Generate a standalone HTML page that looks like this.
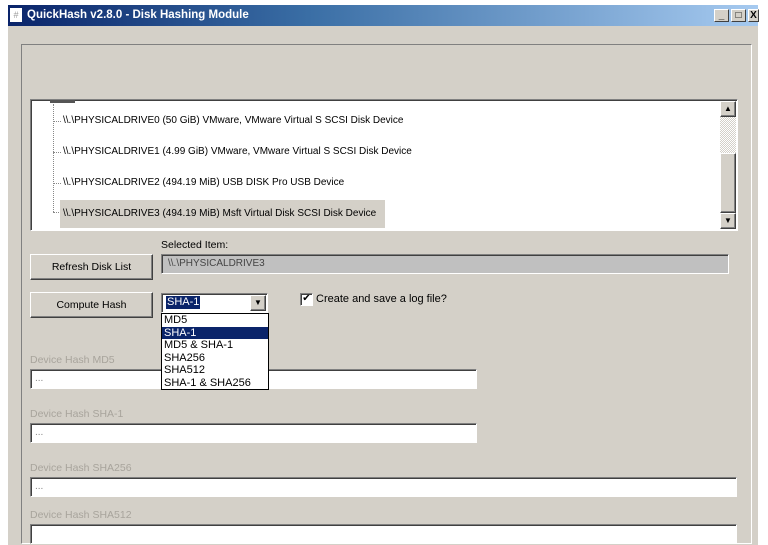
<!DOCTYPE html><html><head><style>
body{margin:0;width:768px;height:533px;background:#fff;position:relative;overflow:hidden;font-family:"Liberation Sans",sans-serif;font-size:11px;}
.a{position:absolute;box-sizing:border-box;white-space:nowrap}
.win{left:8px;top:5px;width:750px;height:540px;background:#d4d0c8;}
.title{left:8px;top:5px;width:750px;height:21px;background:linear-gradient(90deg,#0a246a 0%,#3a6ea5 40%,#a6caf0 100%);color:#fff;font-weight:bold;font-size:11.5px;line-height:21px;padding-left:19px}
.tb{width:15px;height:13px;top:9px;background:#d4d0c8;border:1px solid;border-color:#fff #404040 #404040 #fff;font-size:10px;line-height:11px;text-align:center;color:#000;font-weight:bold}
.sunk{border:1px solid;border-color:#808080 #fff #fff #808080;box-shadow:inset 1px 1px 0 #404040}
.btn{background:#d4d0c8;border:1px solid;border-color:#fff #404040 #404040 #fff;box-shadow:inset -1px -1px 0 #808080;text-align:center;color:#000;font-size:11px}
.lbl{color:#a8a49c;font-size:11px}
.txt{background:#fff;color:#888;font-size:10px;padding-left:4px;line-height:18px}
.row{left:60px;height:22px;line-height:22px;color:#000;font-size:10px;padding:0 3px}
.dd div{height:12.5px;line-height:12.5px;padding-left:2px;font-size:11px}
</style></head><body>
<div class="a win"></div>
<div class="a title">QuickHash v2.8.0 - Disk Hashing Module</div>
<div class="a" style="left:10px;top:8px;width:12px;height:14px;background:#fff;color:#999;font-size:9px;text-align:center;line-height:14px">#</div>
<div class="a tb" style="left:714px">_</div>
<div class="a tb" style="left:731px">□</div>
<div class="a tb" style="left:748px;width:11px">X</div>
<div class="a" style="left:21px;top:44px;width:731px;height:500px;border:1px solid;border-color:#808080 #fff #fff #808080"></div>
<div class="a sunk" style="left:30px;top:99px;width:708px;height:132px;background:#fff"></div>
<div class="a" style="left:50px;top:100px;width:25px;height:3px;background:#555"></div>
<div class="a" style="left:53px;top:104px;height:108px;border-left:1px dotted #888"></div>
<div class="a" style="left:53px;top:121px;width:8px;border-top:1px dotted #888"></div>
<div class="a" style="left:53px;top:152px;width:8px;border-top:1px dotted #888"></div>
<div class="a" style="left:53px;top:183px;width:8px;border-top:1px dotted #888"></div>
<div class="a" style="left:53px;top:212px;width:8px;border-top:1px dotted #888"></div>
<div class="a row" style="top:110px">\\.\PHYSICALDRIVE0 (50 GiB) VMware, VMware Virtual S SCSI Disk Device</div>
<div class="a row" style="top:141px">\\.\PHYSICALDRIVE1 (4.99 GiB) VMware, VMware Virtual S SCSI Disk Device</div>
<div class="a row" style="top:172px">\\.\PHYSICALDRIVE2 (494.19 MiB) USB DISK Pro USB Device</div>
<div class="a row" style="top:200px;background:#d4d0c8;height:28px;line-height:28px;width:325px">\\.\PHYSICALDRIVE3 (494.19 MiB) Msft Virtual Disk SCSI Disk Device</div>
<div class="a" style="left:720px;top:101px;width:16px;height:128px;background:repeating-conic-gradient(#fff 0 25%,#d4d0c8 0 50%) 0 0/2px 2px"></div>
<div class="a btn" style="left:720px;top:101px;width:16px;height:16px;font-size:8px;line-height:14px">▲</div>
<div class="a btn" style="left:720px;top:153px;width:16px;height:60px"></div>
<div class="a btn" style="left:720px;top:213px;width:16px;height:16px;font-size:8px;line-height:14px">▼</div>
<div class="a" style="left:161px;top:239px;font-size:10.5px">Selected Item:</div>
<div class="a sunk" style="left:161px;top:254px;width:568px;height:20px;background:#c0c0c0;padding-left:6px;line-height:18px;color:#444;font-size:10px">\\.\PHYSICALDRIVE3</div>
<div class="a btn" style="left:30px;top:254px;width:123px;height:26px;line-height:24px;font-size:10.5px">Refresh Disk List</div>
<div class="a btn" style="left:30px;top:292px;width:123px;height:26px;line-height:24px;font-size:10.5px">Compute Hash</div>
<div class="a sunk" style="left:161px;top:293px;width:107px;height:20px;background:#fff"></div>
<div class="a" style="left:166px;top:296px;background:#0a246a;color:#fff;padding:0 1px;line-height:13px">SHA-1</div>
<div class="a btn" style="left:250px;top:295px;width:16px;height:16px;font-size:8px;line-height:14px">▼</div>
<div class="a sunk" style="left:300px;top:293px;width:13px;height:13px;background:#fff;font-size:10px;line-height:10px;text-align:center">✔</div>
<div class="a" style="left:316px;top:293px">Create and save a log file?</div>
<div class="a lbl" style="left:30px;top:354px;font-size:10.5px">Device Hash MD5</div>
<div class="a sunk txt" style="left:30px;top:369px;width:447px;height:20px">...</div>
<div class="a dd" style="left:161px;top:313px;width:108px;height:77px;background:#fff;border:1px solid #000">
<div>MD5</div><div style="background:#0a246a;color:#fff">SHA-1</div><div>MD5 &amp; SHA-1</div><div>SHA256</div><div>SHA512</div><div>SHA-1 &amp; SHA256</div></div>
<div class="a lbl" style="left:30px;top:408px;font-size:10.5px">Device Hash SHA-1</div>
<div class="a sunk txt" style="left:30px;top:423px;width:447px;height:20px">...</div>
<div class="a lbl" style="left:30px;top:462px;font-size:10.5px">Device Hash SHA256</div>
<div class="a sunk txt" style="left:30px;top:477px;width:707px;height:20px">...</div>
<div class="a lbl" style="left:30px;top:509px;font-size:10.5px">Device Hash SHA512</div>
<div class="a sunk txt" style="left:30px;top:524px;width:707px;height:20px"></div>
</body></html>
